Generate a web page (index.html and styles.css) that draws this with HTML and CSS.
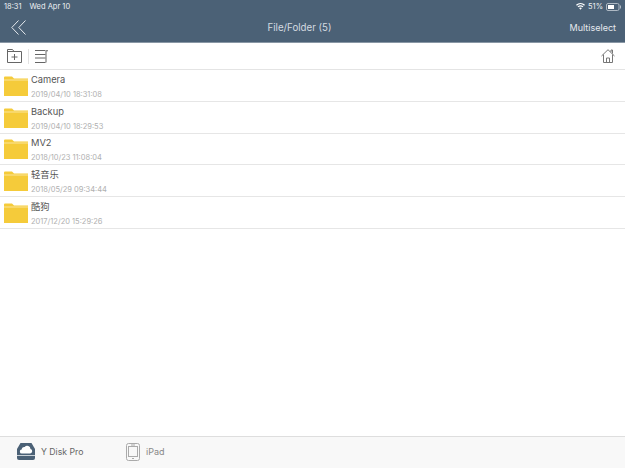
FILE: index.html
```
<!DOCTYPE html>
<html>
<head>
<meta charset="utf-8">
<title>File/Folder</title>
<link rel="stylesheet" href="styles.css">
</head>
<body>
<div class="app">
  <header class="navbar">
    <div class="status">
      <span class="time">18:31</span><span class="date">Wed Apr 10</span>
      <span class="status-right">
        <svg class="wifi" width="9" height="7" viewBox="0 0 11 8"><path d="M5.500 8 3.700 5.900a2.700 2.700 0 0 1 3.600 0zM2.900 5 1.900 3.900a5.500 5.500 0 0 1 7.200 0L8.100 5a4 4 0 0 0-5.200 0zM1.100 3 0 1.900a8.200 8.200 0 0 1 11 0L9.900 3a6.700 6.700 0 0 0-8.800 0z" fill="#fff"/></svg>
        <span class="pct">51%</span>
        <svg class="battery" width="15" height="8" viewBox="0 0 15 8"><rect x=".5" y=".5" width="12.500" height="7" rx="1.500" fill="none" stroke="#aeb9c4"/><rect x="2" y="2" width="6" height="4" fill="#fff"/><rect x="14" y="2.500" width="1" height="3" fill="#aeb9c4"/></svg>
      </span>
    </div>
    <div class="title-row">
      <svg class="back" width="15" height="15" viewBox="0 0 15 15"><path d="M7.500 .5 .8 7.500l6.700 7M14.500 .5 7.800 7.500l6.700 7" fill="none" stroke="#e6eaee" stroke-width="1"/></svg>
      <span class="title">File/Folder (5)</span>
      <span class="multi">Multiselect</span>
    </div>
  </header>
  <div class="toolbar">
    <svg width="15" height="14" viewBox="0 0 15 14"><path d="M.5 13.500V.5h5l1.500 2h7.500v11zM.5 2.500H7M7.500 5v6M4.500 8h6" fill="none" stroke="#666" stroke-width="1"/></svg>
    <span class="tool-sep"></span>
    <svg width="14" height="13" viewBox="0 0 14 13"><path d="M1 .5h10.500M1 4.500h10.500M1 8h10.500M1 12.500h10.500M12 1v11.500" fill="none" stroke="#666" stroke-width="1"/><path d="M12 0h2l-1 2z" fill="#666"/></svg>
    <svg class="home" width="14" height="14" viewBox="0 0 14 14"><path d="M.5 7 7 .7 13.500 7M2.500 5.500v8h9v-8M5.500 13.500V9h3v4.500M10 3V1h1.500v3.500" fill="none" stroke="#777" stroke-width="1"/></svg>
  </div>
  <ul class="list">
    <li class="row"><svg class="folder" viewBox="0 0 24 20"><use href="#folder"/></svg><div class="info"><div class="name">Camera</div><div class="stamp">2019/04/10 18:31:08</div></div></li>
    <li class="row"><svg class="folder" viewBox="0 0 24 20"><use href="#folder"/></svg><div class="info"><div class="name">Backup</div><div class="stamp">2019/04/10 18:29:53</div></div></li>
    <li class="row"><svg class="folder" viewBox="0 0 24 20"><use href="#folder"/></svg><div class="info"><div class="name">MV2</div><div class="stamp">2018/10/23 11:08:04</div></div></li>
    <li class="row"><svg class="folder" viewBox="0 0 24 20"><use href="#folder"/></svg><div class="info"><div class="name">轻音乐</div><div class="stamp">2018/05/29 09:34:44</div></div></li>
    <li class="row"><svg class="folder" viewBox="0 0 24 20"><use href="#folder"/></svg><div class="info"><div class="name">酷狗</div><div class="stamp">2017/12/20 15:29:26</div></div></li>
  </ul>
  <nav class="tabbar">
    <div class="tab tab-disk">
      <svg width="18" height="17" viewBox="0 0 18 17"><path d="M3.500 0h11L18 6v9a2 2 0 0 1-2 2H2a2 2 0 0 1-2-2V6z" fill="#4b6176"/><path d="M5 10.500a2 2 0 0 1-.3-4 2.500 2.500 0 0 1 3-2.500 3.300 3.300 0 0 1 5.800 2 2.300 2.300 0 0 1-.3 4.500z" fill="#fff"/><rect x="0" y="12" width="18" height="1" fill="#c9d1d8"/></svg>
      <span>Y Disk Pro</span>
    </div>
    <div class="tab tab-pad">
      <svg width="14" height="18" viewBox="0 0 14 18"><rect x=".5" y=".5" width="13" height="17" rx="2" fill="none" stroke="#aaa"/><rect x="2.500" y="3.500" width="9" height="10" fill="none" stroke="#aaa"/><path d="M5 2h4M6 15.500h2" stroke="#aaa"/></svg>
      <span>iPad</span>
    </div>
  </nav>
</div>
<svg class="defs" width="0" height="0"><defs><g id="folder"><path d="M0 1.500A1 1 0 0 1 1 .5h7l2 2h14v17.500H0z" fill="#f5cb3a"/><rect x="0" y="3.500" width="24" height="1" fill="#fbe69a"/></g></defs></svg>
</body>
</html>
```
FILE: styles.css
```
* { box-sizing: border-box; }
html, body { margin: 0; padding: 0; }
body { width: 625px; height: 468px; overflow: hidden; background: #fff; font-family: "Inter", "Liberation Sans", "Noto Sans CJK SC", sans-serif; }
.app { display: flex; flex-direction: column; height: 468px; }
.navbar { height: 43px; background: #4b6176; color: #fff; border-bottom: 1px solid #8997a5; flex: none; }
.status { height: 13px; display: flex; align-items: center; padding: 0 4px 0 4px; font-size: 7.500px; color: #edf0f3; }
.date { margin-left: 8px; }
.status-right { margin-left: auto; display: flex; align-items: center; gap: 3px; }
.title-row { height: 29px; position: relative; display: flex; align-items: center; justify-content: space-between; padding: 0 9px 0 11px; }
.title { position: absolute; left: 0; right: 26px; text-align: center; font-size: 9.700px; color: #d5dbe1; }
.multi { font-size: 9px; color: #e6eaee; }
.toolbar { height: 27px; display: flex; align-items: center; padding: 0 10px 0 7px; border-bottom: 1px solid #e4e4e4; flex: none; }
.tool-sep { width: 1px; height: 15px; background: #e2e2e2; margin: 0 5px 0 6px; }
.home { margin-left: auto; }
.list { list-style: none; margin: 0; padding: 0; flex: 1; }
.row { height: 31.800px; display: flex; align-items: center; padding: 0 0 0 4px; border-bottom: 1px solid #e6e6e6; }
.folder { width: 24px; height: 20px; margin-top: 1px; flex: none; }
.info { margin-left: 3px; }
.name { font-size: 9.300px; line-height: 12px; color: #555; margin-top: 3px; }
.stamp { font-size: 7.500px; line-height: 10px; color: #b0b0b0; margin-top: 4px; }
.tabbar { height: 32px; flex: none; display: flex; align-items: center; background: #f8f8f8; border-top: 1px solid #dedede; padding-left: 17px; }
.tab { display: flex; align-items: center; font-size: 8.700px; color: #666; margin-top: -2px; }
.tab-disk { gap: 6px; width: 109px; }
.tab-pad { gap: 6px; color: #888; font-size: 9px; }
.defs { position: absolute; }
```
